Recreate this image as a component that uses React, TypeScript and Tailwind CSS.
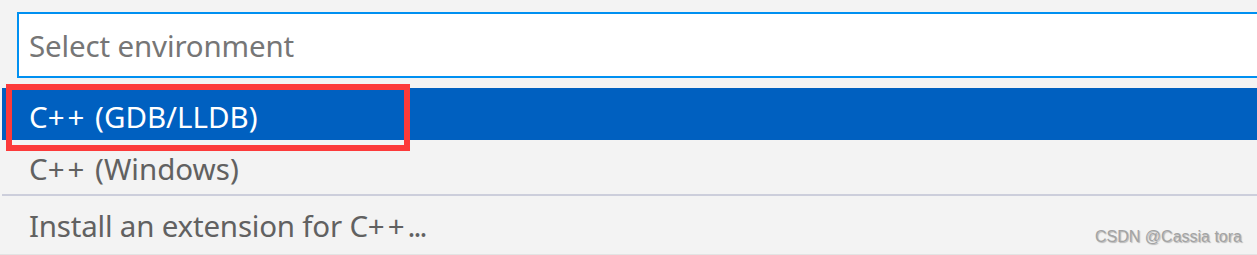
export default function App() {
  const rowText = "font-['Noto_Sans','Open_Sans',sans-serif] text-[29.5px] leading-none";
  const plus = "tracking-[3px]";

  return (
    <div className="relative h-[255px] w-[1257px] overflow-hidden bg-[#f3f3f3]">
      {/* input */}
      <div className="pl-[17px] pt-[12px]">
        <div className="flex h-[66px] w-[1260px] items-center border-2 border-r-0 border-[#0090f1] bg-white pl-[10px] pt-[2px]">
          <span className={`${rowText} tracking-[-0.15px] text-[#767676]`}>Select environment</span>
        </div>
      </div>

      {/* list */}
      <div className="mt-[10px] pl-[2px]">
        <div className="flex h-[52px] items-center bg-[#0060c0] pl-[27px] pt-[6px]">
          <span className={`${rowText} text-white`}>
            C<span className={plus}>++</span> (GDB/LLDB)
          </span>
        </div>
        <div className="flex h-[54px] items-center pl-[27px] pt-[4px]">
          <span className={`${rowText} text-[#616161]`}>
            C<span className={plus}>++</span> (Windows)
          </span>
        </div>
        <div className="h-[2px] bg-[#cccedb]" />
        <div className="flex h-[58px] items-center pl-[27px] pt-[2px]">
          <span className={`${rowText} tracking-[-0.2px] text-[#616161]`}>
            Install an extension for C<span className={plus}>++</span>
            <span className="tracking-[-2px]">...</span>
          </span>
        </div>
      </div>
      <div className="h-px bg-[#e3e3e3]" />

      {/* annotation box */}
      <div className="pointer-events-none absolute left-[6px] top-[84px] h-[67px] w-[404px] border-[6px] border-[#fc3a3a]" />

      {/* watermark */}
      <div className="pointer-events-none absolute right-[15px] top-[229px] font-['Liberation_Sans',Arial,sans-serif] text-[16px] leading-none text-[#a3a3a3] [text-shadow:1px_1px_1px_rgba(0,0,0,0.25)]">
        CSDN @Cassia tora
      </div>
    </div>
  );
}
